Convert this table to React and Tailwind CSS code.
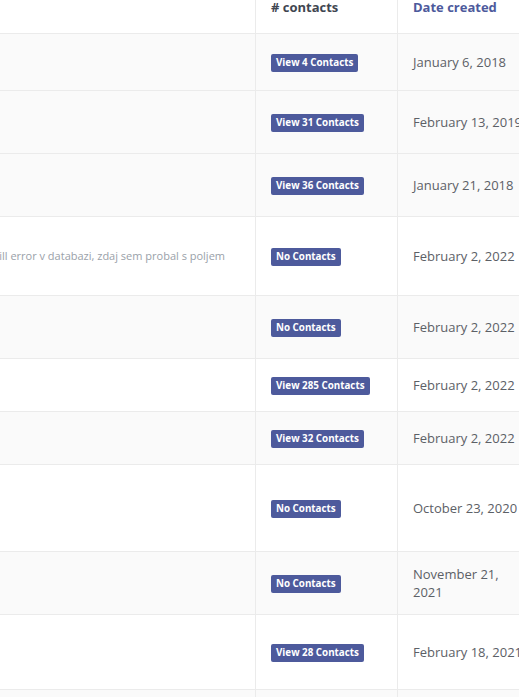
import React from "react";

const rows = [
  { h: "h-[57px]", gray: true, badge: "View 4 Contacts", date: "January 6, 2018" },
  { h: "h-[63px]", gray: true, badge: "View 31 Contacts", date: "February 13, 2019" },
  { h: "h-[63px]", gray: true, badge: "View 36 Contacts", date: "January 21, 2018" },
  { h: "h-[79px]", gray: false, badge: "No Contacts", date: "February 2, 2022", left: "ill error v databazi, zdaj sem probal s poljem" },
  { h: "h-[63px]", gray: true, badge: "No Contacts", date: "February 2, 2022" },
  { h: "h-[53px]", gray: false, badge: "View 285 Contacts", date: "February 2, 2022" },
  { h: "h-[53px]", gray: true, badge: "View 32 Contacts", date: "February 2, 2022" },
  { h: "h-[87px]", gray: false, badge: "No Contacts", date: "October 23, 2020" },
  { h: "h-[63px]", gray: true, badge: "No Contacts", date: "November 21, 2021" },
  { h: "h-[75px]", gray: false, badge: "View 28 Contacts", date: "February 18, 2021" },
  { h: "h-[60px]", gray: true, badge: "", date: "" },
];

export default function App() {
  return (
    <div
      className="w-[519px] h-[697px] overflow-hidden bg-white"
      style={{ fontFamily: '"Open Sans", "Liberation Sans", sans-serif' }}
    >
      <div className="w-[600px]">
        <div className="flex h-[34px] border-b border-[#ebebeb] box-border">
          <div className="w-[256px] shrink-0 border-r border-[#ebebeb]" />
          <div className="w-[142px] shrink-0 border-r border-[#ebebeb] pl-[15px] text-[13px] leading-[14px] font-bold text-[#3f4651]">
            # contacts
          </div>
          <div className="w-[140px] shrink-0 pl-[15px] text-[13px] leading-[14px] font-bold text-[#4d5a9c]">
            Date created
          </div>
        </div>
        {rows.map((r, i) => (
          <div
            key={i}
            className={`flex ${r.h} border-b border-[#ebebeb] box-border ${r.gray ? "bg-[#fafafa]" : "bg-white"}`}
          >
            <div className="w-[256px] shrink-0 border-r border-[#ebebeb] flex items-center justify-end overflow-hidden whitespace-nowrap pr-[30px]">
              {r.left && (
                <span className="text-[11px] leading-[16px] text-[#9aa1a9]">{r.left}</span>
              )}
            </div>
            <div className="w-[142px] shrink-0 border-r border-[#ebebeb] pl-[15px] flex items-center">
              {r.badge && (
                <span className="inline-block mt-[2px] bg-[#4d5a9c] text-white text-[9.8px] leading-[12px] font-bold px-[5px] py-[3px] rounded-[2px] whitespace-nowrap">
                  {r.badge}
                </span>
              )}
            </div>
            <div className="w-[143px] shrink-0 pl-[15px] pr-[14px] flex items-center">
              {r.date && (
                <span className="text-[13px] leading-[18px] text-[#5c6066] whitespace-normal">
                  {r.date}
                </span>
              )}
            </div>
          </div>
        ))}
      </div>
    </div>
  );
}
